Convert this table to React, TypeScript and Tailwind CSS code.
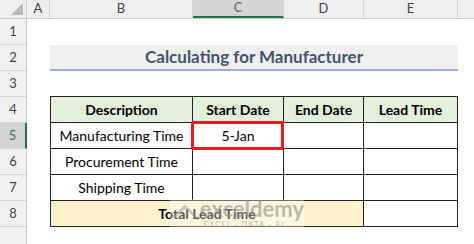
import React from 'react';

const cols = ['A', 'B', 'C', 'D', 'E'];
const colW = ['w-[23px]', 'w-[143px]', 'w-[91px]', 'w-[80px]', 'w-[94px]'];

function ColHeader() {
  return (
    <div className="flex h-[19px] bg-[#efefef] border-b border-[#cfcfcf]">
      <div className="relative w-[27px] shrink-0 border-r border-[#cfcfcf]">
        <div className="absolute right-[3px] bottom-[3px] w-0 h-0 border-l-[12px] border-l-transparent border-b-[12px] border-b-[#b9b9b9]" />
      </div>
      {cols.map((c, i) => (
        <div
          key={c}
          className={`${colW[i]} shrink-0 flex items-center justify-center border-r border-[#d6d6d6] text-[13px] ${
            c === 'C' ? 'bg-[#d4d4d4] text-[#4b6d58] border-b-2 border-b-[#217346]' : 'text-[#444]'
          }`}
        >
          {c}
        </div>
      ))}
      <div className="flex-1" />
    </div>
  );
}

function RowHeaders() {
  return (
    <div className="w-[27px] shrink-0 bg-[#f1f1f1] border-r border-[#cfcfcf]">
      {[1, 2, 3, 4, 5, 6, 7, 8, 9].map((n) => (
        <div
          key={n}
          className={`h-[26px] flex items-center justify-center border-b border-[#d6d6d6] text-[13px] ${
            n === 5 ? 'bg-[#d4d4d4] text-[#4b6d58] border-r-2 border-r-[#217346] -mr-px' : 'text-[#444]'
          }`}
        >
          {n === 9 ? '' : n}
        </div>
      ))}
    </div>
  );
}

function Cell({ w, className = '', children }: { w: string; className?: string; children?: React.ReactNode }) {
  return (
    <div className={`${w} shrink-0 h-[26px] flex items-center justify-center border-r border-b border-[#222] text-[14px] text-black ${className}`}>
      {children}
    </div>
  );
}

export default function App() {
  const rows = ['Manufacturing Time', 'Procurement Time', 'Shipping Time'];
  return (
    <div className="relative w-[474px] h-[244px] overflow-hidden bg-white" style={{ fontFamily: 'Lato, "Noto Sans", sans-serif' }}>
      <ColHeader />
      <div className="flex">
        <RowHeaders />
        <div className="flex-1">
          <div className="h-[26px]" />
          <div className="h-[26px] flex">
            <div className="w-[23px] shrink-0" />
            <div className="w-[408px] shrink-0 bg-[#f0f0f0] border-b-2 border-[#9fadde] flex items-center justify-center text-[17px] font-bold text-[#44546a]">
              Calculating for Manufacturer
            </div>
          </div>
          <div className="h-[26px]" />
          <div className="flex">
            <div className="w-[23px] shrink-0" />
            <div className="border-l border-t border-[#222] -mt-px">
              <div className="flex bg-[#e2efda] font-bold">
                <Cell w="w-[142px]">Description</Cell>
                <Cell w="w-[91px]">Start Date</Cell>
                <Cell w="w-[80px]">End Date</Cell>
                <Cell w="w-[94px]">Lead Time</Cell>
              </div>
              {rows.map((r, i) => (
                <div key={r} className="flex">
                  <Cell w="w-[142px]">{r}</Cell>
                  <Cell w="w-[91px]" className="relative">
                    {i === 0 && (
                      <>
                        <span>5-Jan</span>
                        <div className="absolute -left-[2px] -top-[2px] w-[93px] h-[29px] border-[3px] border-[#ee1c1c] rounded-[2px]" />
                      </>
                    )}
                  </Cell>
                  <Cell w="w-[80px]" />
                  <Cell w="w-[94px]" />
                </div>
              ))}
              <div className="flex">
                <Cell w="w-[313px]" className="bg-[#fff2cc] font-bold">Total Lead Time</Cell>
                <Cell w="w-[94px]" />
              </div>
            </div>
          </div>
        </div>
      </div>
      <div className="absolute left-[170px] top-[199px] w-[134px] h-[40px] bg-white/35 flex items-start">
        <svg width="36" height="26" viewBox="0 0 36 26" className="mt-[1px]">
          <path d="M2 18 L18 3 L34 18 L29 18 L18 8 L7 18 Z" fill="#9a9a9a" fillOpacity="0.55" />
        </svg>
        <div className="flex flex-col leading-none">
          <span className="text-[22px] font-bold text-[#8c8c8c]/60 tracking-[0px] -mt-[1px]">exceldemy</span>
          <span className="text-[7px] text-[#8c8c8c]/60 tracking-[1.5px] mt-[1px] ml-[4px]">EXCEL · DATA · BI</span>
        </div>
      </div>
    </div>
  );
}
